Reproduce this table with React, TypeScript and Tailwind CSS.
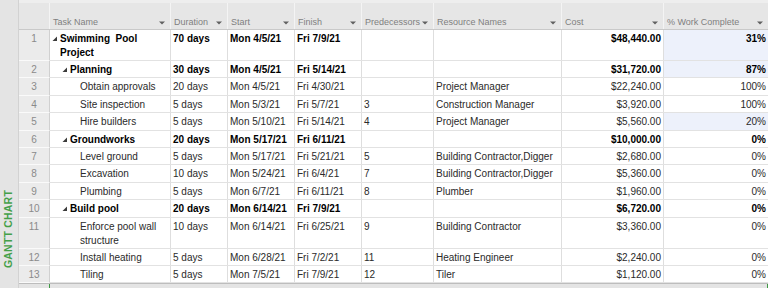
import React from 'react'

type Row = {
  id: number
  name: string[]
  level: 0 | 1 | 2
  dur: string
  start: string
  finish: string
  pred: string
  res: string
  cost: string
  pct: string
  h: number
  blue?: boolean
}

const rows: Row[] = [
  { id: 1, name: ['Swimming\u00a0\u00a0Pool', 'Project'], level: 0, dur: '70 days', start: 'Mon 4/5/21', finish: 'Fri 7/9/21', pred: '', res: '', cost: '$48,440.00', pct: '31%', h: 31, blue: true },
  { id: 2, name: ['Planning'], level: 1, dur: '30 days', start: 'Mon 4/5/21', finish: 'Fri 5/14/21', pred: '', res: '', cost: '$31,720.00', pct: '87%', h: 17, blue: true },
  { id: 3, name: ['Obtain approvals'], level: 2, dur: '20 days', start: 'Mon 4/5/21', finish: 'Fri 4/30/21', pred: '', res: 'Project Manager', cost: '$22,240.00', pct: '100%', h: 18 },
  { id: 4, name: ['Site inspection'], level: 2, dur: '5 days', start: 'Mon 5/3/21', finish: 'Fri 5/7/21', pred: '3', res: 'Construction Manager', cost: '$3,920.00', pct: '100%', h: 17 },
  { id: 5, name: ['Hire builders'], level: 2, dur: '5 days', start: 'Mon 5/10/21', finish: 'Fri 5/14/21', pred: '4', res: 'Project Manager', cost: '$5,560.00', pct: '20%', h: 18, blue: true },
  { id: 6, name: ['Groundworks'], level: 1, dur: '20 days', start: 'Mon 5/17/21', finish: 'Fri 6/11/21', pred: '', res: '', cost: '$10,000.00', pct: '0%', h: 17 },
  { id: 7, name: ['Level ground'], level: 2, dur: '5 days', start: 'Mon 5/17/21', finish: 'Fri 5/21/21', pred: '5', res: 'Building Contractor,Digger', cost: '$2,680.00', pct: '0%', h: 17 },
  { id: 8, name: ['Excavation'], level: 2, dur: '10 days', start: 'Mon 5/24/21', finish: 'Fri 6/4/21', pred: '7', res: 'Building Contractor,Digger', cost: '$5,360.00', pct: '0%', h: 18 },
  { id: 9, name: ['Plumbing'], level: 2, dur: '5 days', start: 'Mon 6/7/21', finish: 'Fri 6/11/21', pred: '8', res: 'Plumber', cost: '$1,960.00', pct: '0%', h: 17 },
  { id: 10, name: ['Build pool'], level: 1, dur: '20 days', start: 'Mon 6/14/21', finish: 'Fri 7/9/21', pred: '', res: '', cost: '$6,720.00', pct: '0%', h: 18 },
  { id: 11, name: ['Enforce pool wall', 'structure'], level: 2, dur: '10 days', start: 'Mon 6/14/21', finish: 'Fri 6/25/21', pred: '9', res: 'Building Contractor', cost: '$3,360.00', pct: '0%', h: 31 },
  { id: 12, name: ['Install heating'], level: 2, dur: '5 days', start: 'Mon 6/28/21', finish: 'Fri 7/2/21', pred: '11', res: 'Heating Engineer', cost: '$2,240.00', pct: '0%', h: 17 },
  { id: 13, name: ['Tiling'], level: 2, dur: '5 days', start: 'Mon 7/5/21', finish: 'Fri 7/9/21', pred: '12', res: 'Tiler', cost: '$1,120.00', pct: '0%', h: 17 },
]

function Arrow() {
  return (
    <svg width="6" height="4" viewBox="0 0 6 4" className="shrink-0">
      <polygon points="0,0.5 6,0.5 3,3.5" fill="#606060" />
    </svg>
  )
}

function Collapse() {
  return (
    <svg width="5" height="5" viewBox="0 0 5 5" className="mr-[3px] shrink-0">
      <polygon points="5,0.5 5,5 0.5,5" fill="#3a3a3a" />
    </svg>
  )
}

function HeadCell({ w, label, last }: { w: string; label: string; last?: boolean }) {
  return (
    <div className={`${w} flex items-end justify-between pl-[3px] pr-[5px] leading-[14px] ${last ? '' : 'border-r border-[#f4f4f4]'}`}>
      <span>{label}</span>
      <span className="mb-[4px] ml-[2px]"><Arrow /></span>
    </div>
  )
}

export default function App() {
  const cell = 'border-r border-[#dedede] pt-[1.5px] leading-[14px] overflow-hidden whitespace-nowrap'
  return (
    <div className="w-[768px] h-[288px] overflow-hidden flex bg-white text-[10px] text-[#2a2a2a] font-['Liberation_Sans',Arial,sans-serif]">
      {/* side label strip */}
      <div className="w-[19px] h-full bg-[#e4e4e4] border-r border-[#d2d2d2] flex flex-col justify-end items-center pb-[20px]">
        <span className="[writing-mode:vertical-rl] rotate-180 text-[10.5px] font-bold tracking-[0.2px] text-[#44a049]">GANTT CHART</span>
      </div>

      <div className="flex-1 flex flex-col">
        {/* top band */}
        <div className="h-[3px] bg-[#eeeeee]" />
        {/* header */}
        <div className="h-[27px] flex bg-[#e6e6e6] border-b border-[#c9c9c9] text-[9px] text-[#7f7f7f]">
          <div className="w-[31px] border-r border-[#f4f4f4]" />
          <HeadCell w="w-[121px]" label="Task Name" />
          <HeadCell w="w-[57px]" label="Duration" />
          <HeadCell w="w-[67px]" label="Start" />
          <HeadCell w="w-[67px]" label="Finish" />
          <HeadCell w="w-[72px]" label="Predecessors" />
          <HeadCell w="w-[128px]" label="Resource Names" />
          <HeadCell w="w-[102px]" label="Cost" />
          <HeadCell w="w-[104px]" label="% Work Complete" last />
        </div>

        {rows.map(r => {
          const bold = r.level < 2 ? 'font-bold text-black' : ''
          return (
            <div key={r.id} className="flex border-b border-[#e2e2e2]" style={{ height: r.h }}>
              <div className="w-[31px] -mb-px bg-[#ebebeb] border-b border-r border-[#fafafa] border-r-[#d0d0d0] text-[#8a8a8a] text-center pt-[1.5px] leading-[14px]">
                {r.id}
              </div>
              <div className={`w-[121px] ${cell} ${bold} flex ${r.level === 0 ? 'pl-[2px]' : r.level === 1 ? 'pl-[12px]' : 'pl-[30px]'}`}>
                {r.level < 2 && <span className="pt-[4.5px]"><Collapse /></span>}
                <div className="flex flex-col">
                  {r.name.map((n, i) => <span key={i}>{n}</span>)}
                </div>
              </div>
              <div className={`w-[57px] pl-[2px] ${cell} ${bold}`}>{r.dur}</div>
              <div className={`w-[67px] pl-[2px] ${cell} ${bold}`}>{r.start}</div>
              <div className={`w-[67px] pl-[2px] ${cell} ${bold}`}>{r.finish}</div>
              <div className={`w-[72px] pl-[2px] ${cell}`}>{r.pred}</div>
              <div className={`w-[128px] pl-[2px] ${cell}`}>{r.res}</div>
              <div className={`w-[102px] pr-[2px] text-right ${cell} ${bold}`}>{r.cost}</div>
              <div className={`w-[104px] pr-[2px] text-right pt-[1.5px] leading-[14px] ${bold} ${r.blue ? 'bg-[#edf1fb]' : ''}`}>{r.pct}</div>
            </div>
          )
        })}

        {/* bottom band */}
        <div className="flex-1 flex bg-[#e4e4e4] border-t border-[#bdbdbd]">
          <div className="w-[31px] border-r border-[#3f9a45]" />
          <div className="flex-1" />
          <div className="w-px bg-[#3f9a45]" />
        </div>
      </div>
    </div>
  )
}
